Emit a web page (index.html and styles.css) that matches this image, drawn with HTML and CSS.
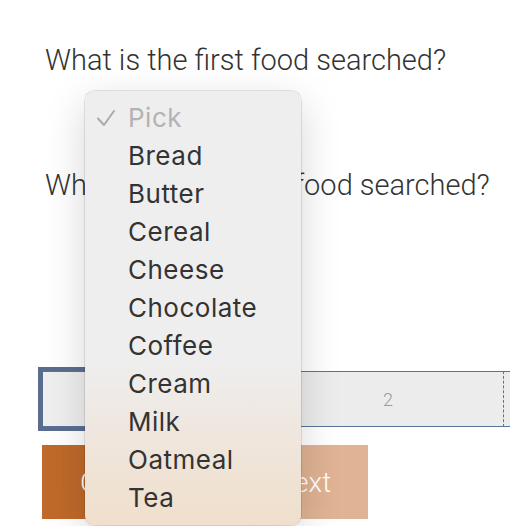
FILE: index.html
```html
<!DOCTYPE html>
<html lang="en">
<head>
<meta charset="utf-8">
<title>Food quiz</title>
<link rel="stylesheet" href="styles.css">
</head>
<body>
<main class="page">
  <section class="question">
    <p class="q-text">What is the first food searched?</p>
    <div class="select-slot">
      <select class="food-select"><option>Pick</option></select>
    </div>
  </section>
  <section class="question">
    <p class="q-text">What is the second food searched?</p>
    <div class="select-slot">
      <select class="food-select"><option>Pick</option></select>
    </div>
  </section>

  <div class="cells">
    <div class="cell cell-active">1</div>
    <div class="cell cell-next">2</div>
    <div class="cell"></div>
  </div>

  <div class="actions">
    <button class="btn">Check</button>
    <button class="btn btn-disabled">Next</button>
  </div>

  <ul class="popup">
    <li class="popup-item popup-item-selected">
      <svg class="check" width="18" height="17" viewBox="0 0 18 17"><path d="M1 8.5 L7 15 L17 1" fill="none" stroke="#ababab" stroke-width="2" stroke-linecap="round" stroke-linejoin="round"/></svg>
      Pick
    </li>
    <li class="popup-item">Bread</li>
    <li class="popup-item">Butter</li>
    <li class="popup-item">Cereal</li>
    <li class="popup-item">Cheese</li>
    <li class="popup-item">Chocolate</li>
    <li class="popup-item">Coffee</li>
    <li class="popup-item">Cream</li>
    <li class="popup-item">Milk</li>
    <li class="popup-item">Oatmeal</li>
    <li class="popup-item">Tea</li>
  </ul>
</main>
</body>
</html>
```

FILE: styles.css
```css
html, body {
  margin: 0;
  padding: 0;
  background: #ffffff;
}

body {
  width: 510px;
  height: 526px;
  overflow: hidden;
}

.page {
  position: relative;
  padding: 42px 0 0 42px;
  font-family: Roboto, "Liberation Sans", sans-serif;
  color: #333333;
}

.question {
  display: flex;
  flex-direction: column;
  gap: 22px;
  padding-bottom: 27px;
}

.q-text {
  margin: 0 0 0 3px;
  font-size: 29px;
  font-weight: 300;
  line-height: 36px;
  white-space: nowrap;
  color: #333333;
}

.select-slot {
  height: 40px;
  padding-left: 70px;
}

.food-select {
  width: 180px;
  height: 40px;
  font-size: 20px;
}

.cells {
  display: flex;
  margin-top: 79px;
  width: 1000px;
}

.cell {
  flex: 0 0 231px;
  box-sizing: border-box;
  height: 56px;
  display: flex;
  align-items: center;
  justify-content: center;
  background: #ececec;
  border-top: 1px solid #5a7399;
  border-bottom: 1px solid #5a7399;
  font-size: 18px;
  font-weight: 300;
  color: #999999;
}

.cell-active {
  border-left: 1px solid #5b6d8f;
  outline: 4px solid #5b6d8f;
  background: #efefef;
}

.cell-next {
  border-right: 1px dashed #5a7399;
}

.actions {
  display: flex;
  gap: 43px;
  margin-top: 18px;
}

.btn {
  height: 74px;
  padding: 0 37px 0 38px;
  border: none;
  border-radius: 0;
  background: #c0692a;
  color: #ffffff;
  font-family: Roboto, "Liberation Sans", sans-serif;
  font-size: 28px;
  font-weight: 300;
}

.btn-disabled {
  opacity: 0.5;
}

.popup {
  position: absolute;
  left: 85px;
  top: 91px;
  width: 216px;
  height: 434px;
  box-sizing: border-box;
  margin: 0;
  padding: 8px 0;
  list-style: none;
  border-radius: 9px;
  background: linear-gradient(to bottom, #eeeeee 0%, #eeeeee 62%, #efe6dd 80%, #f0dfcc 100%);
  box-shadow: 0 0 0 0.5px rgba(0, 0, 0, 0.2), 0 12px 40px rgba(0, 0, 0, 0.17);
  font-family: Inter, "Noto Sans", sans-serif;
  font-size: 26px;
  letter-spacing: 0.5px;
  line-height: 38px;
  color: #333333;
}

.popup-item {
  position: relative;
  padding-left: 43px;
  white-space: nowrap;
}

.popup-item-selected {
  color: #b3b3b3;
}

.check {
  position: absolute;
  left: 12px;
  top: 11px;
}
```
